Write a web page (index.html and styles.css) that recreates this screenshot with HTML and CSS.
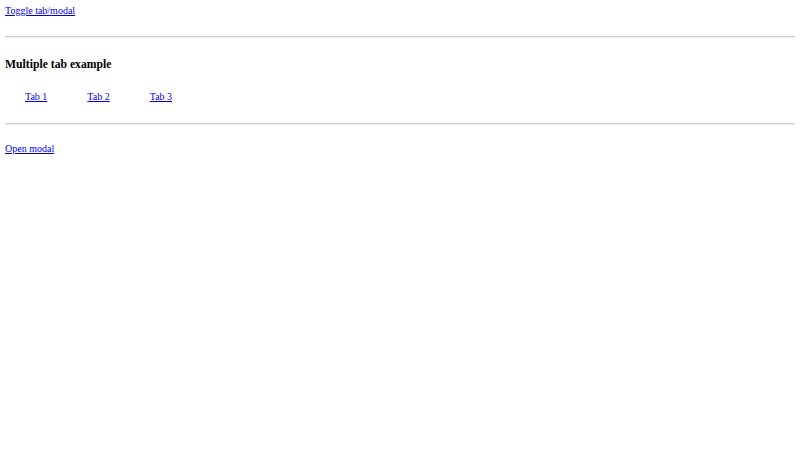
FILE: index.html
```html
<!DOCTYPE html>
<html lang="en">
<head>
<meta charset="utf-8">
<title>Multiple tab example</title>
<link rel="stylesheet" href="styles.css">
</head>
<body>
  <div class="toggle"><a href="#">Toggle tab/modal</a></div>
  <hr class="rule rule-first">
  <h3 class="title">Multiple tab example</h3>
  <nav class="tabs">
    <a class="tab" href="#">Tab 1</a>
    <a class="tab" href="#">Tab 2</a>
    <a class="tab" href="#">Tab 3</a>
  </nav>
  <hr class="rule rule-second">
  <div class="modal-link"><a href="#">Open modal</a></div>
</body>
</html>
```

FILE: styles.css
```css
html, body {
  background: #ffffff;
}
body {
  margin: 0;
  padding: 5px 5px 0 5px;
  font-family: "Liberation Serif", "Times New Roman", serif;
  font-size: 10px;
  line-height: 11.5px;
  color: #000000;
}
a {
  color: #0000ee;
  text-decoration: underline;
}
.toggle {
  margin: 0;
}
.rule {
  height: 0;
  margin: 0;
  border: 0;
  border-top: 1px solid #d2d2d2;
  border-bottom: 1px solid #ededed;
}
.rule-first {
  margin-top: 19.5px;
}
.title {
  margin: 20px 0 0 0;
  font-size: 11.7px;
  line-height: 13.5px;
  font-weight: bold;
}
.tabs {
  display: flex;
  margin-top: 19.5px;
}
.tab {
  padding: 0 20px;
}
.rule-second {
  margin-top: 20px;
}
.modal-link {
  margin-top: 18.5px;
}
```
